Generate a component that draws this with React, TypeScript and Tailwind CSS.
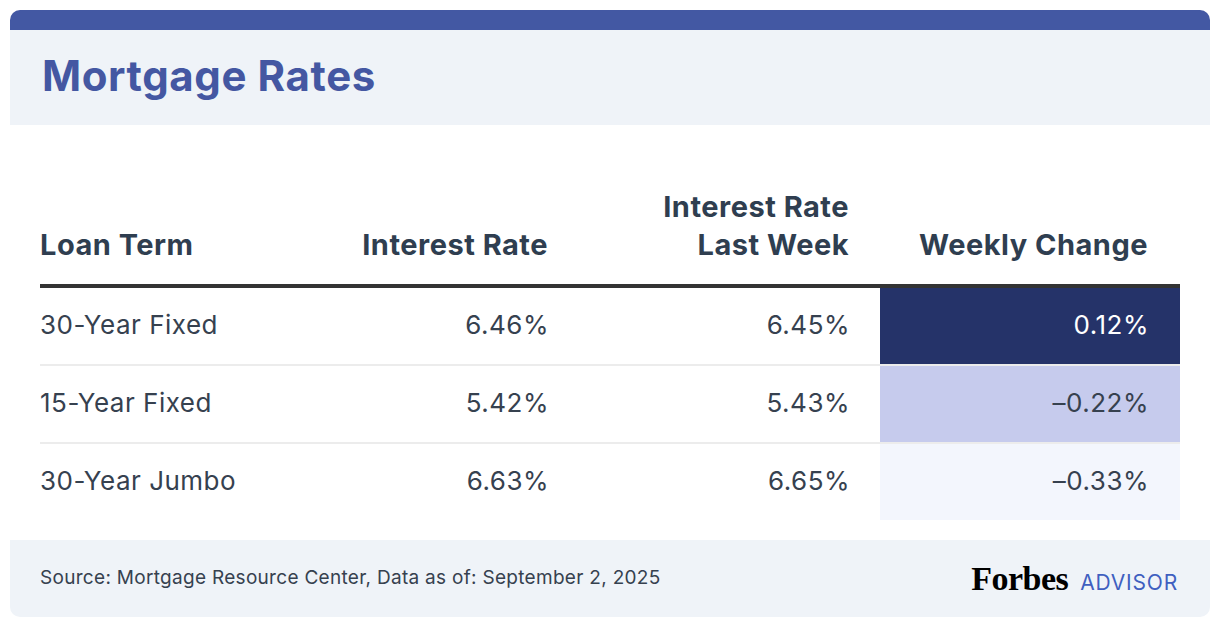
import React from "react";

const rows = [
  { term: "30-Year Fixed", rate: "6.46%", last: "6.45%", change: "0.12%", tone: "dark" },
  { term: "15-Year Fixed", rate: "5.42%", last: "5.43%", change: "–0.22%", tone: "mid" },
  { term: "30-Year Jumbo", rate: "6.63%", last: "6.65%", change: "–0.33%", tone: "light" },
];

const font = { fontFamily: "Inter, 'Noto Sans', sans-serif" };

export default function App() {
  return (
    <div className="w-[1220px] h-[628px] bg-white px-[10px] pt-[10px]" style={font}>
      <div className="h-[20px] rounded-t-[10px] bg-[#4358a3]" />
      <div className="h-[95px] bg-[#eff3f8] px-[32px] flex items-center">
        <h1 className="text-[42px] font-bold text-[#4457a2] tracking-[0.6px] leading-none pb-[4px]">Mortgage Rates</h1>
      </div>

      <div className="px-[30px] pt-[63px] pb-[20px]">
        {/* header */}
        <div className="grid grid-cols-[240px_300px_300px_300px] border-b-4 border-[#333333] text-[29px] font-bold text-[#2f3e50] leading-[38px] tracking-[0.5px]">
          <div className="flex items-end pb-[20px]">Loan Term</div>
          <div className="flex items-end justify-end pb-[20px] pr-[32px]">Interest Rate</div>
          <div className="flex items-end justify-end text-right pb-[20px] pr-[31px]">
            Interest Rate
            <br />
            Last Week
          </div>
          <div className="flex items-end justify-end pb-[20px] pr-[32px]">Weekly Change</div>
        </div>

        {/* body */}
        {rows.map((r, i) => (
          <div
            key={r.term}
            className={`grid grid-cols-[240px_300px_300px_300px] h-[76px] text-[26px] tracking-[0.5px] text-[#36414f] ${
              i < rows.length - 1 ? "box-content border-b-2 border-[#ececec]" : ""
            }`}
          >
            <div className="flex items-center pb-[4px]">{r.term}</div>
            <div className="flex items-center justify-end pb-[4px] pr-[31px]">{r.rate}</div>
            <div className="flex items-center justify-end pb-[4px] pr-[30px]">{r.last}</div>
            <div
              className={`flex items-center justify-end pb-[4px] pr-[31px] ${
                r.tone === "dark"
                  ? "bg-[#253369] text-white"
                  : r.tone === "mid"
                  ? "bg-[#c6cbed]"
                  : "bg-[#f3f6fd]"
              }`}
            >
              {r.change}
            </div>
          </div>
        ))}
      </div>

      <div className="h-[77px] rounded-b-[10px] bg-[#eff3f8] pl-[30px] pr-[32px] flex items-center justify-between">
        <p className="text-[19px] tracking-[0.3px] text-[#36414f]">Source: Mortgage Resource Center, Data as of: September 2, 2025</p>
        <div className="flex items-baseline gap-[12px]">
          <span
            className="text-[34px] font-bold text-black tracking-[-0.5px] leading-none"
            style={{ fontFamily: "'Liberation Serif', serif" }}
          >
            Forbes
          </span>
          <span className="text-[21px] text-[#3f5fc0] tracking-[0.8px] leading-none">ADVISOR</span>
        </div>
      </div>
    </div>
  );
}
